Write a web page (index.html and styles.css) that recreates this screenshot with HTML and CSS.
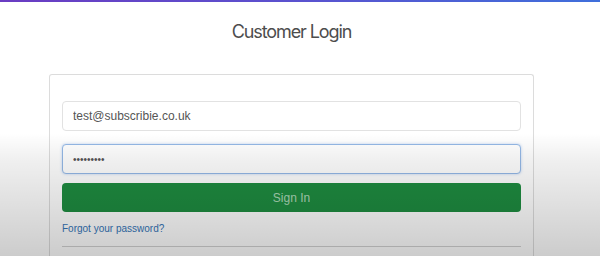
FILE: index.html
```html
<!DOCTYPE html>
<html lang="en">
<head>
<meta charset="utf-8">
<title>Customer Login</title>
<link rel="stylesheet" href="styles.css">
</head>
<body>
<div class="topbar"></div>
<main class="container">
  <h1 class="title">Customer Login</h1>
  <form class="card">
    <input class="field" type="email" value="test@subscribie.co.uk">
    <input class="field field-focus" type="password" value="123456789">
    <button class="btn" type="button">Sign In</button>
    <a class="forgot" href="#">Forgot your password?</a>
    <hr class="divider">
  </form>
</main>
<div class="shade"></div>
</body>
</html>
```

FILE: styles.css
```css
html, body {
  margin: 0;
  padding: 0;
  background: #fff;
  height: 256px;
  overflow: hidden;
}
body {
  font-family: "Liberation Sans", Arial, sans-serif;
  position: relative;
}
.topbar {
  height: 2px;
  background: linear-gradient(to right, #6a3cc2, #5a52cf 50%, #3f6fdb);
}
.container {
  width: 485px;
  margin-left: 49px;
}
.title {
  margin: 18px 0 30px;
  font-family: Inter, "Open Sans", sans-serif;
  font-weight: 400;
  font-size: 18px;
  line-height: 24px;
  letter-spacing: -1.1px;
  color: #4d4d4d;
  text-align: center;
}
.card {
  border: 1px solid #dcdcdc;
  border-bottom: none;
  border-radius: 3px 3px 0 0;
  padding: 26px 12px 0;
  display: flex;
  flex-direction: column;
  height: 182px;
  box-sizing: border-box;
}
.field {
  box-sizing: border-box;
  height: 30px;
  border: 1px solid #e2e2e2;
  border-radius: 4px;
  padding: 0 10px;
  font-family: "Liberation Sans", Arial, sans-serif;
  font-size: 12px;
  color: #555;
  background: #fff;
  outline: none;
  margin: 0 0 13px;
}
.field-focus {
  border-color: #94b8e6;
  box-shadow: 0 0 3px rgba(102, 150, 225, 0.45);
  font-size: 10px;
  letter-spacing: 0;
  margin-bottom: 9px;
}
.btn {
  height: 29px;
  border: none;
  border-radius: 4px;
  background: #1e8c40;
  color: rgba(225, 245, 228, 0.72);
  font-family: "Liberation Sans", Arial, sans-serif;
  font-size: 12px;
  padding: 0;
}
.forgot {
  margin-top: 10px;
  font-size: 10px;
  line-height: 14px;
  color: #3475b8;
  text-decoration: none;
  align-self: flex-start;
}
.divider {
  width: 100%;
  margin: 10px 0 0;
  border: none;
  border-top: 1px solid #d2d2d2;
}
.shade {
  position: absolute;
  left: 0;
  top: 0;
  width: 600px;
  height: 256px;
  pointer-events: none;
  background: linear-gradient(to bottom, rgba(0,0,0,0) 0, rgba(0,0,0,0) 52%, rgba(0,0,0,0.06) 62%, rgba(0,0,0,0.2) 100%);
}
```
